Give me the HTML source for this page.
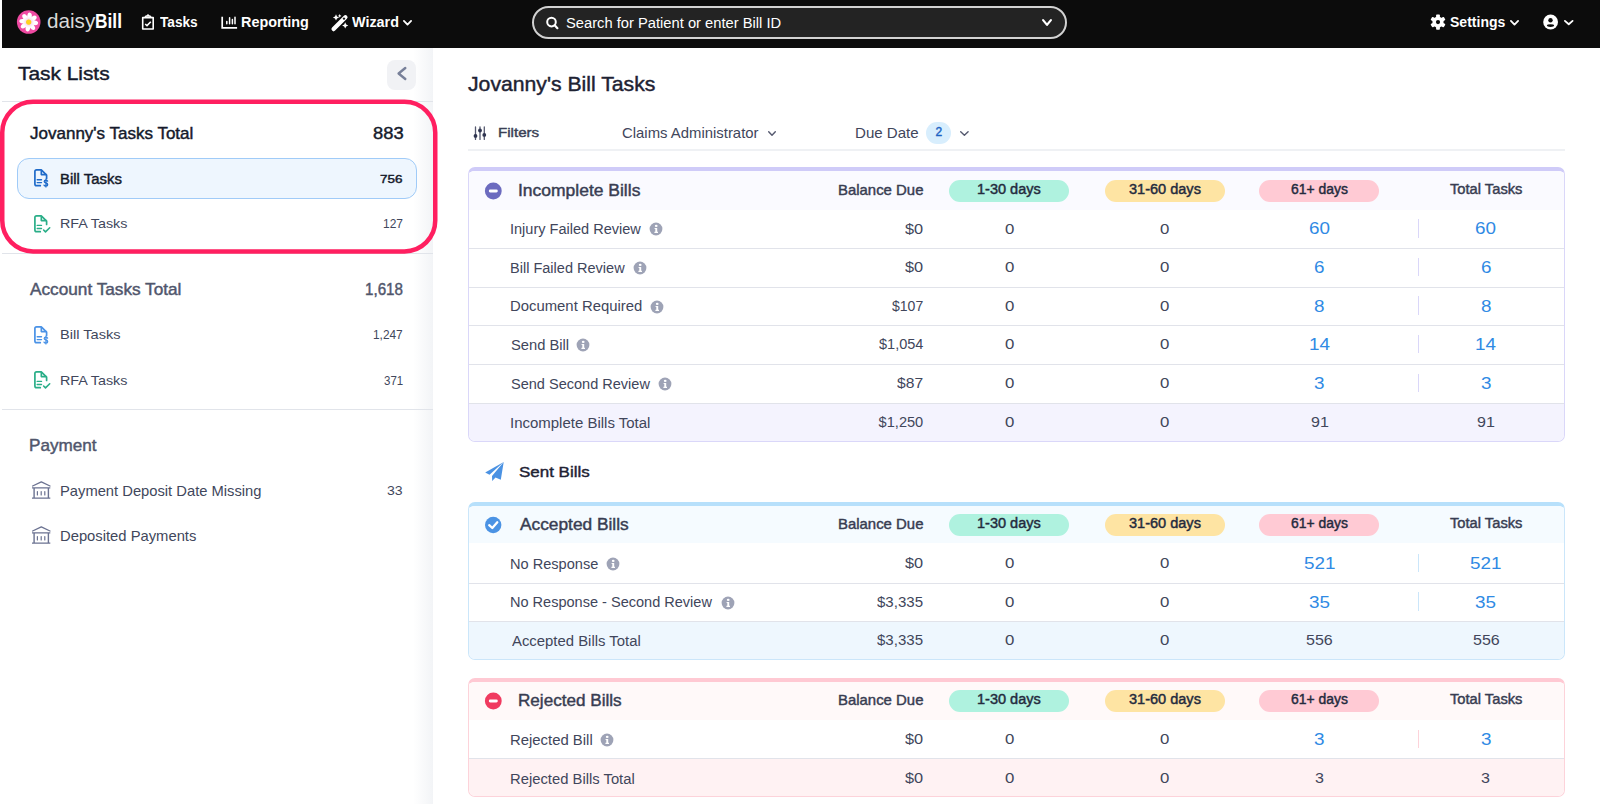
<!DOCTYPE html><html><head><meta charset="utf-8"><title>daisyBill Tasks</title><style>
*{margin:0;padding:0;box-sizing:border-box}
html,body{width:1600px;height:804px;overflow:hidden;background:#fff;font-family:"Liberation Sans",sans-serif}
.t{position:absolute;line-height:1;white-space:nowrap;transform-origin:0 0}
.a{position:absolute}
svg{position:absolute;overflow:visible}
</style></head><body>
<div class="a" style="left:2px;top:0;width:1598px;height:47.6px;background:#0c0c0c"></div>
<svg style="left:0;top:0" width="60" height="48"><defs><radialGradient id="pg" gradientUnits="userSpaceOnUse" cx="0" cy="0" r="9.5"><stop offset="0.25" stop-color="#f8d8ec"/><stop offset="0.6" stop-color="#fff"/></radialGradient></defs><g transform="translate(28.7 22.05)"><circle r="11.8" fill="#ef4aa2"/><ellipse cx="0" cy="-5.7" rx="2.3" ry="3.8" fill="url(#pg)" transform="rotate(8)"/><ellipse cx="0" cy="-5.7" rx="2.3" ry="3.8" fill="url(#pg)" transform="rotate(53)"/><ellipse cx="0" cy="-5.7" rx="2.3" ry="3.8" fill="url(#pg)" transform="rotate(98)"/><ellipse cx="0" cy="-5.7" rx="2.3" ry="3.8" fill="url(#pg)" transform="rotate(143)"/><ellipse cx="0" cy="-5.7" rx="2.3" ry="3.8" fill="url(#pg)" transform="rotate(188)"/><ellipse cx="0" cy="-5.7" rx="2.3" ry="3.8" fill="url(#pg)" transform="rotate(233)"/><ellipse cx="0" cy="-5.7" rx="2.3" ry="3.8" fill="url(#pg)" transform="rotate(278)"/><ellipse cx="0" cy="-5.7" rx="2.3" ry="3.8" fill="url(#pg)" transform="rotate(323)"/><circle r="2.6" fill="#ffd31c"/></g></svg>
<div class="t" style="left:47.37px;top:10.82px;font-size:20.3px;color:#d9d9d9;transform:scaleX(1.0196);">daisy</div>
<div class="t" style="left:95.47px;top:10.56px;font-size:20.6px;color:#fff;font-weight:700;transform:scaleX(0.8410);">Bill</div>
<svg style="left:140px;top:12px" width="16" height="20" viewBox="0 0 16 20"><path d="M2.7 5.6 H13.2 V17 H2.7 Z" fill="none" stroke="#fff" stroke-width="1.6" stroke-linejoin="round"/><path d="M5 5.6 L6.2 4 H9.8 L11 5.6" fill="none" stroke="#fff" stroke-width="1.6"/><circle cx="8" cy="3.3" r="1.1" fill="#fff"/><path d="M5.2 12 L7 13.6 L10.8 9.7" fill="none" stroke="#fff" stroke-width="1.6"/></svg>
<div class="t" style="left:159.86px;top:14.70px;font-size:14.3px;color:#fff;font-weight:700;transform:scaleX(0.9548);">Tasks</div>
<svg style="left:220px;top:14px" width="20" height="16" viewBox="0 0 20 16"><path d="M2.2 2.7 V13.9 H17.1" fill="none" stroke="#fff" stroke-width="1.7"/><path d="M6.8 7.5V9.8 M9.6 3.8V9.8 M12.4 5.5V9.8 M15 3.3V9.8" stroke="#fff" stroke-width="1.5" stroke-linecap="round"/></svg>
<div class="t" style="left:241.07px;top:14.70px;font-size:14.3px;color:#fff;font-weight:700;transform:scaleX(1.0055);">Reporting</div>
<svg style="left:326px;top:8px" width="26" height="26" viewBox="0 0 26 26"><path d="M7.6 21.1 L19.4 9.3" stroke="#fff" stroke-width="4.3" stroke-linecap="round"/><rect x="17" y="9.7" width="2" height="2" transform="rotate(45 18 10.7)" fill="#0c0c0c"/><path d="M10 6.3 l1 2.1 l2.1 1 l-2.1 1 l-1 2.1 l-1 -2.1 l-2.1 -1 l2.1 -1z" fill="#fff"/><path d="M13.7 6.1 l0.6 1.2 l1.2 0.6 l-1.2 0.6 l-0.6 1.2 l-0.6 -1.2 l-1.2 -0.6 l1.2 -0.6z" fill="#fff"/><path d="M19.2 14.3 l1 2.1 l2.1 1 l-2.1 1 l-1 2.1 l-1 -2.1 l-2.1 -1 l2.1 -1z" fill="#fff"/></svg>
<div class="t" style="left:352.00px;top:14.70px;font-size:14.3px;color:#fff;font-weight:700;transform:scaleX(1.0037);">Wizard</div>
<svg style="left:403px;top:19.5px" width="9" height="5.5" viewBox="0 0 9 5.5"><path d="M0.9 0.9 L4.5 4.6 L8.1 0.9" fill="none" stroke="#fff" stroke-width="1.8" stroke-linecap="round" stroke-linejoin="round"/></svg>
<div class="a" style="left:532.2px;top:5.6px;width:535.3px;height:33.8px;border:2px solid #d2d2d2;border-radius:17px;background:#232323"></div>
<svg style="left:540px;top:12px" width="24" height="22" viewBox="0 0 24 22"><circle cx="11.5" cy="10.1" r="4.3" fill="none" stroke="#fff" stroke-width="2"/><path d="M14.7 13.3 L17.4 16.2" stroke="#fff" stroke-width="2.2" stroke-linecap="round"/></svg>
<div class="t" style="left:566.34px;top:15.13px;font-size:15.2px;color:#fff;transform:scaleX(0.9693);">Search for Patient or enter Bill ID</div>
<svg style="left:1042.3px;top:19px" width="10" height="7" viewBox="0 0 10 7"><path d="M1.1 1.1 L5.0 5.9 L8.9 1.1" fill="none" stroke="#fff" stroke-width="2.2" stroke-linecap="round" stroke-linejoin="round"/></svg>
<svg style="left:1426px;top:10px" width="24" height="24"><g transform="translate(12 12.1)"><rect x="-1.9" y="-7.6" width="3.8" height="4" rx="0.8" fill="#fff" transform="rotate(0)"/><rect x="-1.9" y="-7.6" width="3.8" height="4" rx="0.8" fill="#fff" transform="rotate(60)"/><rect x="-1.9" y="-7.6" width="3.8" height="4" rx="0.8" fill="#fff" transform="rotate(120)"/><rect x="-1.9" y="-7.6" width="3.8" height="4" rx="0.8" fill="#fff" transform="rotate(180)"/><rect x="-1.9" y="-7.6" width="3.8" height="4" rx="0.8" fill="#fff" transform="rotate(240)"/><rect x="-1.9" y="-7.6" width="3.8" height="4" rx="0.8" fill="#fff" transform="rotate(300)"/><circle r="5.6" fill="#fff"/><circle r="2.1" fill="#0c0c0c"/></g></svg>
<div class="t" style="left:1450.18px;top:14.70px;font-size:14.3px;color:#fff;font-weight:700;transform:scaleX(0.9817);">Settings</div>
<svg style="left:1510px;top:19.5px" width="9" height="5.5" viewBox="0 0 9 5.5"><path d="M0.9 0.9 L4.5 4.6 L8.1 0.9" fill="none" stroke="#fff" stroke-width="1.8" stroke-linecap="round" stroke-linejoin="round"/></svg>
<svg style="left:1538px;top:10px" width="24" height="24"><circle cx="12.6" cy="12" r="7.4" fill="#fff"/><circle cx="12.5" cy="10.3" r="2.2" fill="#0c0c0c"/><ellipse cx="12.5" cy="15.6" rx="3.6" ry="1.3" fill="#0c0c0c"/></svg>
<svg style="left:1564px;top:19.8px" width="9.5" height="5.2" viewBox="0 0 9.5 5.2"><path d="M0.9 0.9 L4.75 4.3 L8.6 0.9" fill="none" stroke="#fff" stroke-width="1.8" stroke-linecap="round" stroke-linejoin="round"/></svg>
<div class="a" style="left:413px;top:47.6px;width:20px;height:757px;background:linear-gradient(to right,rgba(240,242,245,0) 0,rgba(240,242,245,0.45) 11px,rgba(240,242,245,0.85) 20px)"></div>
<div class="t" style="left:17.52px;top:64.69px;font-size:18.8px;color:#151a2b;-webkit-text-stroke:0.42px #151a2b;transform:scaleX(1.1109);">Task Lists</div>
<div class="a" style="left:387px;top:59.6px;width:29px;height:30.4px;border-radius:8px;background:#f1f2f5"></div>
<svg style="left:395px;top:65px" width="14" height="18" viewBox="0 0 14 18"><path d="M10.3 3 L3.6 8.5 L10.3 14" fill="none" stroke="#788099" stroke-width="2.4" stroke-linecap="round" stroke-linejoin="round"/></svg>
<div class="a" style="left:2px;top:100.7px;width:431px;height:1px;background:#e1e4ea"></div>
<div class="a" style="left:2px;top:252.9px;width:431px;height:1px;background:#e1e4ea"></div>
<div class="a" style="left:2px;top:408.5px;width:431px;height:1px;background:#e1e4ea"></div>
<div class="t" style="left:30.17px;top:126.01px;font-size:15.7px;color:#151a2b;-webkit-text-stroke:0.42px #151a2b;transform:scaleX(1.0842);">Jovanny's Tasks Total</div>
<div class="t" style="left:373.02px;top:126.01px;font-size:15.7px;color:#151a2b;-webkit-text-stroke:0.42px #151a2b;transform:scaleX(1.1691);">883</div>
<div class="a" style="left:16.8px;top:157.6px;width:400px;height:41.3px;border:1.1px solid #a0cbf8;border-radius:12px;background:#eef6fe"></div>
<svg style="left:33px;top:169px" width="18" height="19" viewBox="0 0 18 19"><path d="M7.3 16.7 H3.6 Q1.9 16.7 1.9 15 V2.6 Q1.9 0.9 3.6 0.9 H8.3 L13.6 6.2 V9.5" fill="none" stroke="#1f6bc9" stroke-width="1.7" stroke-linecap="round" stroke-linejoin="round"/><path d="M8.3 0.9 V5.6 H13.5" fill="none" stroke="#1f6bc9" stroke-width="1.6" stroke-linejoin="round"/><path d="M4.2 10.7 H8.5 M4.2 13.6 H8.5" stroke="#1f6bc9" stroke-width="1.4" stroke-linecap="round"/><path d="M14.6 12.1 Q14 11.2 12.8 11.2 Q11.2 11.2 11.2 12.6 Q11.2 13.7 12.9 14 Q14.7 14.4 14.7 15.7 Q14.7 17 12.9 17 Q11.6 17 11 16.1 M12.95 10.2 V17.9" fill="none" stroke="#1f6bc9" stroke-width="1.3" stroke-linecap="round"/></svg>
<div class="t" style="left:60.43px;top:172.62px;font-size:13.8px;color:#151a2b;-webkit-text-stroke:0.42px #151a2b;transform:scaleX(1.0802);">Bill Tasks</div>
<div class="t" style="left:380.18px;top:174.23px;font-size:11.3px;color:#151a2b;-webkit-text-stroke:0.42px #151a2b;transform:scaleX(1.1894);">756</div>
<svg style="left:33px;top:215px" width="18" height="19" viewBox="0 0 18 19"><path d="M7.3 16.7 H3.6 Q1.9 16.7 1.9 15 V2.6 Q1.9 0.9 3.6 0.9 H8.3 L13.6 6.2 V9.5" fill="none" stroke="#2aae88" stroke-width="1.7" stroke-linecap="round" stroke-linejoin="round"/><path d="M8.3 0.9 V5.6 H13.5" fill="none" stroke="#2aae88" stroke-width="1.6" stroke-linejoin="round"/><path d="M4.2 10.4 H8.5 M4.2 13.5 H8.5" stroke="#2aae88" stroke-width="1.4" stroke-linecap="round"/><path d="M10.6 15 L12.5 16.9 L16.7 12.8" fill="none" stroke="#2aae88" stroke-width="1.6" stroke-linecap="round" stroke-linejoin="round"/></svg>
<div class="t" style="left:60.25px;top:216.69px;font-size:13.6px;color:#41475c;transform:scaleX(1.0541);">RFA Tasks</div>
<div class="t" style="left:383.10px;top:217.93px;font-size:12.6px;color:#41475c;transform:scaleX(0.9483);">127</div>
<svg style="left:0;top:0" width="440" height="260"><rect x="2.25" y="101.8" width="433" height="149.6" rx="30.8" fill="none" stroke="#ff1f60" stroke-width="4.5"/></svg>
<div class="t" style="left:30.34px;top:281.71px;font-size:15.7px;color:#50566c;-webkit-text-stroke:0.42px #50566c;transform:scaleX(1.0969);">Account Tasks Total</div>
<div class="t" style="left:365.46px;top:281.91px;font-size:15.7px;color:#50566c;-webkit-text-stroke:0.42px #50566c;transform:scaleX(0.9666);">1,618</div>
<svg style="left:33px;top:325.5px" width="18" height="19" viewBox="0 0 18 19"><path d="M7.3 16.7 H3.6 Q1.9 16.7 1.9 15 V2.6 Q1.9 0.9 3.6 0.9 H8.3 L13.6 6.2 V9.5" fill="none" stroke="#4a92e6" stroke-width="1.7" stroke-linecap="round" stroke-linejoin="round"/><path d="M8.3 0.9 V5.6 H13.5" fill="none" stroke="#4a92e6" stroke-width="1.6" stroke-linejoin="round"/><path d="M4.2 10.7 H8.5 M4.2 13.6 H8.5" stroke="#4a92e6" stroke-width="1.4" stroke-linecap="round"/><path d="M14.6 12.1 Q14 11.2 12.8 11.2 Q11.2 11.2 11.2 12.6 Q11.2 13.7 12.9 14 Q14.7 14.4 14.7 15.7 Q14.7 17 12.9 17 Q11.6 17 11 16.1 M12.95 10.2 V17.9" fill="none" stroke="#4a92e6" stroke-width="1.3" stroke-linecap="round"/></svg>
<div class="t" style="left:60.23px;top:327.69px;font-size:13.6px;color:#41475c;transform:scaleX(1.0752);">Bill Tasks</div>
<div class="t" style="left:373.21px;top:328.93px;font-size:12.6px;color:#41475c;transform:scaleX(0.9424);">1,247</div>
<svg style="left:33px;top:371px" width="18" height="19" viewBox="0 0 18 19"><path d="M7.3 16.7 H3.6 Q1.9 16.7 1.9 15 V2.6 Q1.9 0.9 3.6 0.9 H8.3 L13.6 6.2 V9.5" fill="none" stroke="#2aae88" stroke-width="1.7" stroke-linecap="round" stroke-linejoin="round"/><path d="M8.3 0.9 V5.6 H13.5" fill="none" stroke="#2aae88" stroke-width="1.6" stroke-linejoin="round"/><path d="M4.2 10.4 H8.5 M4.2 13.5 H8.5" stroke="#2aae88" stroke-width="1.4" stroke-linecap="round"/><path d="M10.6 15 L12.5 16.9 L16.7 12.8" fill="none" stroke="#2aae88" stroke-width="1.6" stroke-linecap="round" stroke-linejoin="round"/></svg>
<div class="t" style="left:60.25px;top:373.99px;font-size:13.6px;color:#41475c;transform:scaleX(1.0541);">RFA Tasks</div>
<div class="t" style="left:383.84px;top:375.03px;font-size:12.6px;color:#41475c;transform:scaleX(0.9121);">371</div>
<div class="t" style="left:29.36px;top:437.84px;font-size:15.9px;color:#50566c;-webkit-text-stroke:0.42px #50566c;transform:scaleX(1.0762);">Payment</div>
<svg style="left:31px;top:480.8px" width="20" height="20" viewBox="0 0 20 20"><path d="M1.6 5 L10.3 0.8 L19 5" fill="none" stroke="#6b7291" stroke-width="1.3" stroke-linecap="round" stroke-linejoin="round"/><path d="M1 6.9 H19.3 M1 17.1 H19.3" stroke="#6b7291" stroke-width="1.4"/><path d="M3.1 6.9 V17.1 M17.4 6.9 V17.1" stroke="#6b7291" stroke-width="1.4"/><path d="M6.4 10.6 V14 M10.2 10.6 V14 M13.8 10.6 V14" stroke="#6b7291" stroke-width="1.2" stroke-linecap="round"/></svg>
<div class="t" style="left:60.12px;top:483.56px;font-size:14.1px;color:#41475c;transform:scaleX(1.0456);">Payment Deposit Date Missing</div>
<div class="t" style="left:387.44px;top:485.33px;font-size:12.6px;color:#41475c;transform:scaleX(1.1150);">33</div>
<svg style="left:31px;top:525.5px" width="20" height="20" viewBox="0 0 20 20"><path d="M1.6 5 L10.3 0.8 L19 5" fill="none" stroke="#6b7291" stroke-width="1.3" stroke-linecap="round" stroke-linejoin="round"/><path d="M1 6.9 H19.3 M1 17.1 H19.3" stroke="#6b7291" stroke-width="1.4"/><path d="M3.1 6.9 V17.1 M17.4 6.9 V17.1" stroke="#6b7291" stroke-width="1.4"/><path d="M6.4 10.6 V14 M10.2 10.6 V14 M13.8 10.6 V14" stroke="#6b7291" stroke-width="1.2" stroke-linecap="round"/></svg>
<div class="t" style="left:60.12px;top:528.96px;font-size:14.1px;color:#41475c;transform:scaleX(1.0486);">Deposited Payments</div>
<div class="t" style="left:467.90px;top:73.82px;font-size:20.3px;color:#1e2233;-webkit-text-stroke:0.42px #1e2233;transform:scaleX(1.0449);">Jovanny's Bill Tasks</div>
<svg style="left:468px;top:120px" width="24" height="26" viewBox="0 0 24 26"><path d="M7.5 7 V19.4 M12 7 V19.4 M16.3 7 V19.4" stroke="#55596f" stroke-width="1.3" stroke-linecap="round"/><circle cx="7.5" cy="15.9" r="1.9" fill="#2f3550"/><circle cx="12" cy="10.5" r="1.9" fill="#2f3550"/><circle cx="16.3" cy="14.9" r="1.9" fill="#2f3550"/></svg>
<div class="t" style="left:497.52px;top:125.79px;font-size:13.6px;color:#3a3f55;-webkit-text-stroke:0.42px #3a3f55;transform:scaleX(1.1130);">Filters</div>
<div class="t" style="left:622.26px;top:125.97px;font-size:14.8px;color:#41465b;transform:scaleX(1.0061);">Claims Administrator</div>
<svg style="left:768px;top:131px" width="8" height="5" viewBox="0 0 8 5"><path d="M0.7 0.7 L4.0 4.3 L7.3 0.7" fill="none" stroke="#55596f" stroke-width="1.4" stroke-linecap="round" stroke-linejoin="round"/></svg>
<div class="t" style="left:854.59px;top:125.97px;font-size:14.8px;color:#41465b;transform:scaleX(1.0185);">Due Date</div>
<div class="a" style="left:926.2px;top:122px;width:24.8px;height:22px;border-radius:12px;background:#d8eefd"></div>
<div class="t" style="left:935.47px;top:126.44px;font-size:12px;color:#1c63c4;-webkit-text-stroke:0.42px #1c63c4;">2</div>
<svg style="left:960.2px;top:131px" width="8.8" height="5" viewBox="0 0 8.8 5"><path d="M0.7 0.7 L4.4 4.3 L8.100000000000001 0.7" fill="none" stroke="#55596f" stroke-width="1.4" stroke-linecap="round" stroke-linejoin="round"/></svg>
<div class="a" style="left:468px;top:149.2px;width:1097px;height:2px;background:#eff1f4"></div>
<div class="a" style="left:468.1px;top:167.2px;width:1097.3000000000002px;height:274.7px;border:1px solid #dad7f9;border-top:4.200000000000017px solid #cfcbf8;border-radius:7px;background:#fff;overflow:hidden"><div class="a" style="left:0;top:0;right:0;height:39.0px;background:#fafaff"></div><div class="a" style="left:0;top:231.99999999999997px;right:0;bottom:0;background:#f4f3fe"></div></div>
<div class="a" style="left:469.1px;top:248.1px;width:1095.3000000000002px;height:1px;background:#e1e3ea"></div>
<div class="a" style="left:469.1px;top:287.0px;width:1095.3000000000002px;height:1px;background:#e1e3ea"></div>
<div class="a" style="left:469.1px;top:325.4px;width:1095.3000000000002px;height:1px;background:#e1e3ea"></div>
<div class="a" style="left:469.1px;top:364.0px;width:1095.3000000000002px;height:1px;background:#e1e3ea"></div>
<div class="a" style="left:469.1px;top:402.9px;width:1095.3000000000002px;height:1px;background:#e1e3ea"></div>
<svg style="left:484px;top:181.9px" width="18" height="18" viewBox="0 0 18 18"><circle cx="9.3" cy="9" r="8.4" fill="#6c6bbf"/><rect x="4.8" y="7.6" width="9" height="2.9" rx="1.4" fill="#fff"/></svg>
<div class="t" style="left:518.26px;top:182.93px;font-size:15.8px;color:#383d52;-webkit-text-stroke:0.42px #383d52;transform:scaleX(1.1061);">Incomplete Bills</div>
<div class="t" style="left:837.73px;top:182.60px;font-size:14.3px;color:#383d52;-webkit-text-stroke:0.42px #383d52;transform:scaleX(1.0435);">Balance Due</div>
<div class="a" style="left:949.3px;top:179.6px;width:120px;height:22.6px;border-radius:11.3px;background:#aff2df"></div>
<div class="t" style="left:977.13px;top:183.22px;font-size:13.8px;color:#242a3d;-webkit-text-stroke:0.42px #242a3d;transform:scaleX(1.0524);">1-30 days</div>
<div class="a" style="left:1104.8px;top:179.6px;width:120px;height:22.6px;border-radius:11.3px;background:#fee4a3"></div>
<div class="t" style="left:1128.79px;top:183.22px;font-size:13.8px;color:#242a3d;-webkit-text-stroke:0.42px #242a3d;transform:scaleX(1.0533);">31-60 days</div>
<div class="a" style="left:1259.4px;top:179.6px;width:120px;height:22.6px;border-radius:11.3px;background:#ffcad4"></div>
<div class="t" style="left:1290.81px;top:183.22px;font-size:13.8px;color:#242a3d;-webkit-text-stroke:0.42px #242a3d;transform:scaleX(1.0104);">61+ days</div>
<div class="t" style="left:1449.73px;top:182.92px;font-size:13.8px;color:#383d52;-webkit-text-stroke:0.42px #383d52;transform:scaleX(1.0651);">Total Tasks</div>
<div class="t" style="left:510.29px;top:222.15px;font-size:14px;color:#41465b;transform:scaleX(1.0376);">Injury Failed Review</div>
<svg style="left:649.3px;top:222.4px" width="14" height="14" viewBox="0 0 14 14"><circle cx="7" cy="7" r="6.4" fill="#9ea3b6"/><ellipse cx="7.2" cy="3.9" rx="1.4" ry="1.1" fill="#fff"/><path d="M5.6 6 H8.2 V9.8 H9 V11 H5.4 V9.8 H6.3 V7.1 H5.6 Z" fill="#fff"/></svg>
<div class="t" style="left:905.14px;top:221.74px;font-size:14.6px;color:#41465b;transform:scaleX(1.1179);">$0</div>
<div class="t" style="left:1004.64px;top:221.74px;font-size:14.6px;color:#41465b;transform:scaleX(1.1500);">0</div>
<div class="t" style="left:1160.14px;top:221.74px;font-size:14.6px;color:#41465b;transform:scaleX(1.1500);">0</div>
<div class="t" style="left:1308.84px;top:220.32px;font-size:16.4px;color:#2f8ae4;transform:scaleX(1.1500);">60</div>
<div class="t" style="left:1475.34px;top:220.32px;font-size:16.4px;color:#2f8ae4;transform:scaleX(1.1500);">60</div>
<div class="a" style="left:1418px;top:219.1px;width:1px;height:18.7px;background:#dad7f9"></div>
<div class="t" style="left:510.44px;top:260.70px;font-size:14px;color:#41465b;transform:scaleX(1.0374);">Bill Failed Review</div>
<svg style="left:633.3px;top:260.95px" width="14" height="14" viewBox="0 0 14 14"><circle cx="7" cy="7" r="6.4" fill="#9ea3b6"/><ellipse cx="7.2" cy="3.9" rx="1.4" ry="1.1" fill="#fff"/><path d="M5.6 6 H8.2 V9.8 H9 V11 H5.4 V9.8 H6.3 V7.1 H5.6 Z" fill="#fff"/></svg>
<div class="t" style="left:905.14px;top:260.29px;font-size:14.6px;color:#41465b;transform:scaleX(1.1179);">$0</div>
<div class="t" style="left:1004.64px;top:260.29px;font-size:14.6px;color:#41465b;transform:scaleX(1.1500);">0</div>
<div class="t" style="left:1160.14px;top:260.29px;font-size:14.6px;color:#41465b;transform:scaleX(1.1500);">0</div>
<div class="t" style="left:1314.12px;top:258.87px;font-size:16.4px;color:#2f8ae4;transform:scaleX(1.1500);">6</div>
<div class="t" style="left:1480.62px;top:258.87px;font-size:16.4px;color:#2f8ae4;transform:scaleX(1.1500);">6</div>
<div class="a" style="left:1418px;top:257.65000000000003px;width:1px;height:18.7px;background:#dad7f9"></div>
<div class="t" style="left:510.41px;top:299.35px;font-size:14px;color:#41465b;transform:scaleX(1.0620);">Document Required</div>
<svg style="left:649.9px;top:299.59999999999997px" width="14" height="14" viewBox="0 0 14 14"><circle cx="7" cy="7" r="6.4" fill="#9ea3b6"/><ellipse cx="7.2" cy="3.9" rx="1.4" ry="1.1" fill="#fff"/><path d="M5.6 6 H8.2 V9.8 H9 V11 H5.4 V9.8 H6.3 V7.1 H5.6 Z" fill="#fff"/></svg>
<div class="t" style="left:892.06px;top:298.94px;font-size:14.6px;color:#41465b;transform:scaleX(0.9618);">$107</div>
<div class="t" style="left:1004.64px;top:298.94px;font-size:14.6px;color:#41465b;transform:scaleX(1.1500);">0</div>
<div class="t" style="left:1160.14px;top:298.94px;font-size:14.6px;color:#41465b;transform:scaleX(1.1500);">0</div>
<div class="t" style="left:1314.12px;top:297.52px;font-size:16.4px;color:#2f8ae4;transform:scaleX(1.1500);">8</div>
<div class="t" style="left:1480.62px;top:297.52px;font-size:16.4px;color:#2f8ae4;transform:scaleX(1.1500);">8</div>
<div class="a" style="left:1418px;top:296.3px;width:1px;height:18.7px;background:#dad7f9"></div>
<div class="t" style="left:510.94px;top:337.85px;font-size:14px;color:#41465b;transform:scaleX(1.0523);">Send Bill</div>
<svg style="left:576.3px;top:338.09999999999997px" width="14" height="14" viewBox="0 0 14 14"><circle cx="7" cy="7" r="6.4" fill="#9ea3b6"/><ellipse cx="7.2" cy="3.9" rx="1.4" ry="1.1" fill="#fff"/><path d="M5.6 6 H8.2 V9.8 H9 V11 H5.4 V9.8 H6.3 V7.1 H5.6 Z" fill="#fff"/></svg>
<div class="t" style="left:878.60px;top:337.44px;font-size:14.6px;color:#41465b;transform:scaleX(0.9945);">$1,054</div>
<div class="t" style="left:1004.64px;top:337.44px;font-size:14.6px;color:#41465b;transform:scaleX(1.1500);">0</div>
<div class="t" style="left:1160.14px;top:337.44px;font-size:14.6px;color:#41465b;transform:scaleX(1.1500);">0</div>
<div class="t" style="left:1308.51px;top:336.02px;font-size:16.4px;color:#2f8ae4;transform:scaleX(1.1500);">14</div>
<div class="t" style="left:1475.01px;top:336.02px;font-size:16.4px;color:#2f8ae4;transform:scaleX(1.1500);">14</div>
<div class="a" style="left:1418px;top:334.8px;width:1px;height:18.7px;background:#dad7f9"></div>
<div class="t" style="left:510.95px;top:376.60px;font-size:14px;color:#41465b;transform:scaleX(1.0377);">Send Second Review</div>
<svg style="left:658.1px;top:376.84999999999997px" width="14" height="14" viewBox="0 0 14 14"><circle cx="7" cy="7" r="6.4" fill="#9ea3b6"/><ellipse cx="7.2" cy="3.9" rx="1.4" ry="1.1" fill="#fff"/><path d="M5.6 6 H8.2 V9.8 H9 V11 H5.4 V9.8 H6.3 V7.1 H5.6 Z" fill="#fff"/></svg>
<div class="t" style="left:897.34px;top:376.19px;font-size:14.6px;color:#41465b;transform:scaleX(1.0711);">$87</div>
<div class="t" style="left:1004.64px;top:376.19px;font-size:14.6px;color:#41465b;transform:scaleX(1.1500);">0</div>
<div class="t" style="left:1160.14px;top:376.19px;font-size:14.6px;color:#41465b;transform:scaleX(1.1500);">0</div>
<div class="t" style="left:1314.21px;top:374.77px;font-size:16.4px;color:#2f8ae4;transform:scaleX(1.1500);">3</div>
<div class="t" style="left:1480.71px;top:374.77px;font-size:16.4px;color:#2f8ae4;transform:scaleX(1.1500);">3</div>
<div class="a" style="left:1418px;top:373.55px;width:1px;height:18.7px;background:#dad7f9"></div>
<div class="t" style="left:510.25px;top:415.70px;font-size:14px;color:#41465b;transform:scaleX(1.0699);">Incomplete Bills Total</div>
<div class="t" style="left:878.60px;top:414.89px;font-size:14.6px;color:#41465b;">$1,250</div>
<div class="t" style="left:1004.64px;top:414.89px;font-size:14.6px;color:#41465b;transform:scaleX(1.1500);">0</div>
<div class="t" style="left:1160.14px;top:414.89px;font-size:14.6px;color:#41465b;transform:scaleX(1.1500);">0</div>
<div class="t" style="left:1310.53px;top:414.89px;font-size:14.6px;color:#41465b;transform:scaleX(1.1000);">91</div>
<div class="t" style="left:1477.03px;top:414.89px;font-size:14.6px;color:#41465b;transform:scaleX(1.1000);">91</div>
<svg style="left:480px;top:456px" width="30" height="30" viewBox="0 0 30 30"><path d="M23.7 6 L5.2 16.4 L9.5 18.7 Z" fill="#4b92e3"/><path d="M23.7 6 L12 20 L12.2 25 L15.5 21.5 L20.8 23.7 Z" fill="#4b92e3"/></svg>
<div class="t" style="left:519.27px;top:464.06px;font-size:15.4px;color:#1e2233;-webkit-text-stroke:0.42px #1e2233;transform:scaleX(1.1024);">Sent Bills</div>
<div class="a" style="left:468.1px;top:501.6px;width:1097.3000000000002px;height:158.69999999999993px;border:1px solid #cbe6fa;border-top:4.399999999999977px solid #b7e0fb;border-radius:7px;background:#fff;overflow:hidden"><div class="a" style="left:0;top:0;right:0;height:37.799999999999955px;background:#f5fbff"></div><div class="a" style="left:0;top:115.29999999999995px;right:0;bottom:0;background:#eef7fe"></div></div>
<div class="a" style="left:469.1px;top:582.8px;width:1095.3000000000002px;height:1px;background:#e1e3ea"></div>
<div class="a" style="left:469.1px;top:620.8px;width:1095.3000000000002px;height:1px;background:#e1e3ea"></div>
<svg style="left:484px;top:515.9px" width="18" height="18" viewBox="0 0 18 18"><circle cx="9.2" cy="9" r="8.2" fill="#4b93e4"/><path d="M5.2 9.2 L8.3 12 L13.3 6.3" fill="none" stroke="#fff" stroke-width="2.3" stroke-linecap="round" stroke-linejoin="round"/></svg>
<div class="t" style="left:519.74px;top:516.93px;font-size:15.8px;color:#383d52;-webkit-text-stroke:0.42px #383d52;transform:scaleX(1.0958);">Accepted Bills</div>
<div class="t" style="left:837.73px;top:516.60px;font-size:14.3px;color:#383d52;-webkit-text-stroke:0.42px #383d52;transform:scaleX(1.0435);">Balance Due</div>
<div class="a" style="left:949.3px;top:513.6px;width:120px;height:22.6px;border-radius:11.3px;background:#aff2df"></div>
<div class="t" style="left:977.13px;top:517.22px;font-size:13.8px;color:#242a3d;-webkit-text-stroke:0.42px #242a3d;transform:scaleX(1.0524);">1-30 days</div>
<div class="a" style="left:1104.8px;top:513.6px;width:120px;height:22.6px;border-radius:11.3px;background:#fee4a3"></div>
<div class="t" style="left:1128.79px;top:517.22px;font-size:13.8px;color:#242a3d;-webkit-text-stroke:0.42px #242a3d;transform:scaleX(1.0533);">31-60 days</div>
<div class="a" style="left:1259.4px;top:513.6px;width:120px;height:22.6px;border-radius:11.3px;background:#ffcad4"></div>
<div class="t" style="left:1290.81px;top:517.22px;font-size:13.8px;color:#242a3d;-webkit-text-stroke:0.42px #242a3d;transform:scaleX(1.0104);">61+ days</div>
<div class="t" style="left:1449.73px;top:516.92px;font-size:13.8px;color:#383d52;-webkit-text-stroke:0.42px #383d52;transform:scaleX(1.0651);">Total Tasks</div>
<div class="t" style="left:510.43px;top:556.60px;font-size:14px;color:#41465b;transform:scaleX(1.0410);">No Response</div>
<svg style="left:606.3px;top:556.8499999999999px" width="14" height="14" viewBox="0 0 14 14"><circle cx="7" cy="7" r="6.4" fill="#9ea3b6"/><ellipse cx="7.2" cy="3.9" rx="1.4" ry="1.1" fill="#fff"/><path d="M5.6 6 H8.2 V9.8 H9 V11 H5.4 V9.8 H6.3 V7.1 H5.6 Z" fill="#fff"/></svg>
<div class="t" style="left:905.14px;top:556.19px;font-size:14.6px;color:#41465b;transform:scaleX(1.1179);">$0</div>
<div class="t" style="left:1004.64px;top:556.19px;font-size:14.6px;color:#41465b;transform:scaleX(1.1500);">0</div>
<div class="t" style="left:1160.14px;top:556.19px;font-size:14.6px;color:#41465b;transform:scaleX(1.1500);">0</div>
<div class="t" style="left:1303.79px;top:554.77px;font-size:16.4px;color:#2f8ae4;transform:scaleX(1.1500);">521</div>
<div class="t" style="left:1470.29px;top:554.77px;font-size:16.4px;color:#2f8ae4;transform:scaleX(1.1500);">521</div>
<div class="a" style="left:1418px;top:553.55px;width:1px;height:18.7px;background:#cbe6fa"></div>
<div class="t" style="left:510.44px;top:595.35px;font-size:14px;color:#41465b;transform:scaleX(1.0378);">No Response - Second Review</div>
<svg style="left:720.6px;top:595.5999999999999px" width="14" height="14" viewBox="0 0 14 14"><circle cx="7" cy="7" r="6.4" fill="#9ea3b6"/><ellipse cx="7.2" cy="3.9" rx="1.4" ry="1.1" fill="#fff"/><path d="M5.6 6 H8.2 V9.8 H9 V11 H5.4 V9.8 H6.3 V7.1 H5.6 Z" fill="#fff"/></svg>
<div class="t" style="left:877.15px;top:594.94px;font-size:14.6px;color:#41465b;transform:scaleX(1.0308);">$3,335</div>
<div class="t" style="left:1004.64px;top:594.94px;font-size:14.6px;color:#41465b;transform:scaleX(1.1500);">0</div>
<div class="t" style="left:1160.14px;top:594.94px;font-size:14.6px;color:#41465b;transform:scaleX(1.1500);">0</div>
<div class="t" style="left:1308.93px;top:593.52px;font-size:16.4px;color:#2f8ae4;transform:scaleX(1.1500);">35</div>
<div class="t" style="left:1475.43px;top:593.52px;font-size:16.4px;color:#2f8ae4;transform:scaleX(1.1500);">35</div>
<div class="a" style="left:1418px;top:592.3px;width:1px;height:18.7px;background:#cbe6fa"></div>
<div class="t" style="left:511.53px;top:634.25px;font-size:14px;color:#41465b;transform:scaleX(1.0631);">Accepted Bills Total</div>
<div class="t" style="left:877.15px;top:633.44px;font-size:14.6px;color:#41465b;transform:scaleX(1.0308);">$3,335</div>
<div class="t" style="left:1004.64px;top:633.44px;font-size:14.6px;color:#41465b;transform:scaleX(1.1500);">0</div>
<div class="t" style="left:1160.14px;top:633.44px;font-size:14.6px;color:#41465b;transform:scaleX(1.1500);">0</div>
<div class="t" style="left:1306.07px;top:633.44px;font-size:14.6px;color:#41465b;transform:scaleX(1.1000);">556</div>
<div class="t" style="left:1472.57px;top:633.44px;font-size:14.6px;color:#41465b;transform:scaleX(1.1000);">556</div>
<div class="a" style="left:468.1px;top:677.8px;width:1097.3000000000002px;height:119.60000000000002px;border:1px solid #fdd3da;border-top:4.0px solid #ffc9d3;border-radius:7px;background:#fff;overflow:hidden"><div class="a" style="left:0;top:0;right:0;height:38.200000000000045px;background:#fff9f9"></div><div class="a" style="left:0;top:76.30000000000007px;right:0;bottom:0;background:#fff2f3"></div></div>
<div class="a" style="left:469.1px;top:757.6px;width:1095.3000000000002px;height:1px;background:#e1e3ea"></div>
<svg style="left:484px;top:691.9px" width="18" height="18" viewBox="0 0 18 18"><circle cx="9.3" cy="9" r="8.4" fill="#f03b60"/><rect x="4.8" y="7.6" width="9" height="2.9" rx="1.4" fill="#fff"/></svg>
<div class="t" style="left:518.46px;top:692.93px;font-size:15.8px;color:#383d52;-webkit-text-stroke:0.42px #383d52;transform:scaleX(1.0832);">Rejected Bills</div>
<div class="t" style="left:837.73px;top:692.60px;font-size:14.3px;color:#383d52;-webkit-text-stroke:0.42px #383d52;transform:scaleX(1.0435);">Balance Due</div>
<div class="a" style="left:949.3px;top:689.6px;width:120px;height:22.6px;border-radius:11.3px;background:#aff2df"></div>
<div class="t" style="left:977.13px;top:693.22px;font-size:13.8px;color:#242a3d;-webkit-text-stroke:0.42px #242a3d;transform:scaleX(1.0524);">1-30 days</div>
<div class="a" style="left:1104.8px;top:689.6px;width:120px;height:22.6px;border-radius:11.3px;background:#fee4a3"></div>
<div class="t" style="left:1128.79px;top:693.22px;font-size:13.8px;color:#242a3d;-webkit-text-stroke:0.42px #242a3d;transform:scaleX(1.0533);">31-60 days</div>
<div class="a" style="left:1259.4px;top:689.6px;width:120px;height:22.6px;border-radius:11.3px;background:#ffcad4"></div>
<div class="t" style="left:1290.81px;top:693.22px;font-size:13.8px;color:#242a3d;-webkit-text-stroke:0.42px #242a3d;transform:scaleX(1.0104);">61+ days</div>
<div class="t" style="left:1449.73px;top:692.92px;font-size:13.8px;color:#383d52;-webkit-text-stroke:0.42px #383d52;transform:scaleX(1.0651);">Total Tasks</div>
<div class="t" style="left:510.41px;top:732.80px;font-size:14px;color:#41465b;transform:scaleX(1.0628);">Rejected Bill</div>
<svg style="left:600.3px;top:733.05px" width="14" height="14" viewBox="0 0 14 14"><circle cx="7" cy="7" r="6.4" fill="#9ea3b6"/><ellipse cx="7.2" cy="3.9" rx="1.4" ry="1.1" fill="#fff"/><path d="M5.6 6 H8.2 V9.8 H9 V11 H5.4 V9.8 H6.3 V7.1 H5.6 Z" fill="#fff"/></svg>
<div class="t" style="left:905.14px;top:732.39px;font-size:14.6px;color:#41465b;transform:scaleX(1.1179);">$0</div>
<div class="t" style="left:1004.64px;top:732.39px;font-size:14.6px;color:#41465b;transform:scaleX(1.1500);">0</div>
<div class="t" style="left:1160.14px;top:732.39px;font-size:14.6px;color:#41465b;transform:scaleX(1.1500);">0</div>
<div class="t" style="left:1314.21px;top:730.97px;font-size:16.4px;color:#2f8ae4;transform:scaleX(1.1500);">3</div>
<div class="t" style="left:1480.71px;top:730.97px;font-size:16.4px;color:#2f8ae4;transform:scaleX(1.1500);">3</div>
<div class="a" style="left:1418px;top:729.75px;width:1px;height:18.7px;background:#fdd3da"></div>
<div class="t" style="left:510.42px;top:771.90px;font-size:14px;color:#41465b;transform:scaleX(1.0570);">Rejected Bills Total</div>
<div class="t" style="left:905.14px;top:771.09px;font-size:14.6px;color:#41465b;transform:scaleX(1.1179);">$0</div>
<div class="t" style="left:1004.64px;top:771.09px;font-size:14.6px;color:#41465b;transform:scaleX(1.1500);">0</div>
<div class="t" style="left:1160.14px;top:771.09px;font-size:14.6px;color:#41465b;transform:scaleX(1.1500);">0</div>
<div class="t" style="left:1314.98px;top:771.09px;font-size:14.6px;color:#41465b;transform:scaleX(1.1000);">3</div>
<div class="t" style="left:1481.48px;top:771.09px;font-size:14.6px;color:#41465b;transform:scaleX(1.1000);">3</div>
</body></html>
